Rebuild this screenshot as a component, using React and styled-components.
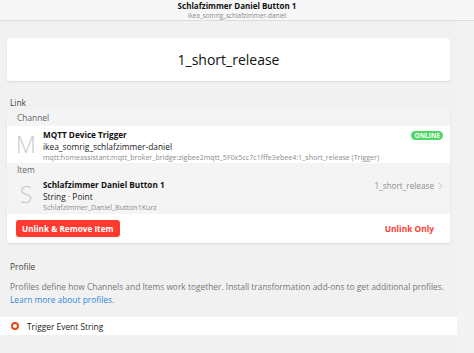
import React from "react";
import styled, { createGlobalStyle } from "styled-components";

const Global = createGlobalStyle`
  html, body { margin: 0; padding: 0; }
  body {
    background: #f1f1f1;
    font-family: "Open Sans", "Noto Sans", sans-serif;
    color: #222;
    width: 474px;
    height: 353px;
    overflow: hidden;
  }
`;

const Page = styled.div`
  display: flex;
  flex-direction: column;
  width: 474px;
  height: 353px;
`;

const NavBar = styled.div`
  height: 21px;
  flex: none;
  box-sizing: border-box;
  padding-top: 1px;
  background: #f7f7f7;
  border-bottom: 1px solid #dcdcdc;
  display: flex;
  flex-direction: column;
  align-items: center;
`;

const NavTitle = styled.div`
  font-size: 8px;
  font-weight: 700;
  line-height: 10px;
  color: #111;
`;

const NavSub = styled.div`
  margin-top: 1px;
  font-size: 6.4px;
  line-height: 8px;
  color: #8a8a8a;
`;

const Body = styled.div`
  flex: 1;
  display: flex;
`;

const Content = styled.div`
  width: 457px;
  display: flex;
  flex-direction: column;
`;

const Gutter = styled.div`
  flex: 1;
  background: #f3f3f3;
`;

const Card = styled.div`
  margin: 0 7px;
  background: #fff;
  border-radius: 3px;
  box-shadow: 0 1px 2px rgba(0, 0, 0, 0.1);
  overflow: hidden;
`;

const EventCard = styled(Card)`
  margin-top: 17px;
  height: 43px;
  display: flex;
  align-items: center;
  justify-content: center;
  font-size: 14px;
  color: #111;
`;

const BlockTitle = styled.div`
  padding: 0 10px;
  margin-top: ${(p) => p.$top}px;
  height: 14px;
  line-height: 14px;
  font-size: 8.4px;
  font-weight: 500;
  color: #444;
`;

const GroupTitle = styled.div`
  background: #f4f4f4;
  padding-left: 10px;
  height: ${(p) => p.$h}px;
  line-height: ${(p) => p.$h}px;
  font-size: 8.4px;
  color: #666;
`;

const Row = styled.div`
  display: flex;
  align-items: flex-start;
  background: ${(p) => (p.$gray ? "#f4f4f4" : "#fff")};
  height: ${(p) => p.$h}px;
  padding: 3px 7px 0 8px;
  box-sizing: border-box;
`;

const Letter = styled.div`
  width: 22px;
  flex: none;
  text-align: center;
  font-size: 23px;
  font-weight: 300;
  color: #c8c8c8;
  line-height: 30px;
`;

const RowMain = styled.div`
  flex: 1;
  margin-left: 6px;
  min-width: 0;
`;

const RowHead = styled.div`
  display: flex;
  align-items: center;
  justify-content: space-between;
`;

const RowTitle = styled.div`
  font-size: 8.2px;
  font-weight: 700;
  line-height: 12px;
  color: #111;
`;

const RowSub = styled.div`
  font-size: 8.4px;
  line-height: 11px;
  color: #222;
`;

const RowText = styled.div`
  font-size: 7.1px;
  line-height: 10px;
  color: #8c8c8c;
  white-space: nowrap;
`;

const Badge = styled.div`
  background: #4cd964;
  color: #fff;
  font-size: 6.6px;
  font-weight: 700;
  line-height: 9px;
  padding: 0 3px;
  border-radius: 5px;
  margin-top: 1px;
`;

const After = styled.div`
  display: flex;
  align-items: center;
  gap: 4px;
  font-size: 8.2px;
  color: #8e8e8e;
  margin-top: 1px;
`;

const Footer = styled.div`
  display: flex;
  align-items: center;
  justify-content: space-between;
  height: 29px;
  padding: 0 16px 0 9px;
  background: #fff;
`;

const DangerButton = styled.button`
  border: none;
  background: #ff3b30;
  color: #fff;
  font-family: inherit;
  font-size: 8.2px;
  font-weight: 700;
  height: 17px;
  padding: 0 6px;
  border-radius: 3px;
`;

const TextButton = styled.button`
  border: none;
  background: none;
  color: #ff3b30;
  font-family: inherit;
  font-size: 8.4px;
  font-weight: 700;
  padding: 0;
`;

const Info = styled.div`
  padding: 0 10px;
  margin-top: 6px;
  font-size: 8.4px;
  line-height: 13px;
  color: #777;
  white-space: nowrap;
`;

const Link = styled.a`
  color: #2f89e0;
  text-decoration: none;
`;

const RadioList = styled.div`
  margin-top: 11px;
  background: #fff;
  height: 18px;
  display: flex;
  align-items: center;
  padding-left: 11px;
  gap: 8px;
  font-size: 8.4px;
  color: #222;
`;

const Radio = styled.span`
  width: 8px;
  height: 8px;
  border-radius: 50%;
  border: 2.5px solid #e8491d;
  box-sizing: border-box;
  background: #fff;
`;

export default function App() {
  return (
    <Page>
      <Global />
      <NavBar>
        <NavTitle>Schlafzimmer Daniel Button 1</NavTitle>
        <NavSub>ikea_somrig_schlafzimmer-daniel</NavSub>
      </NavBar>
      <Body>
        <Content>
          <EventCard>1_short_release</EventCard>
          <BlockTitle $top={15}>Link</BlockTitle>
          <Card>
            <GroupTitle $h={16}>Channel</GroupTitle>
            <Row $h={37}>
              <Letter>M</Letter>
              <RowMain>
                <RowHead>
                  <RowTitle>MQTT Device Trigger</RowTitle>
                  <Badge>ONLINE</Badge>
                </RowHead>
                <RowSub>ikea_somrig_schlafzimmer-daniel</RowSub>
                <RowText>
                  mqtt:homeassistant:mqtt_broker_bridge:zigbee2mqtt_5F0x5cc7c1fffe3ebee4:1_short_release (Trigger)
                </RowText>
              </RowMain>
            </Row>
            <GroupTitle $h={13}>Item</GroupTitle>
            <Row $gray $h={38}>
              <Letter>S</Letter>
              <RowMain>
                <RowHead>
                  <RowTitle>Schlafzimmer Daniel Button 1</RowTitle>
                  <After>
                    1_short_release
                    <svg width="5" height="8" viewBox="0 0 5 8">
                      <path d="M1 1l3 3-3 3" fill="none" stroke="#c7c7cc" strokeWidth="1" />
                    </svg>
                  </After>
                </RowHead>
                <RowSub>String · Point</RowSub>
                <RowText>Schlafzimmer_Daniel_Button1Kurz</RowText>
              </RowMain>
            </Row>
            <Footer>
              <DangerButton>Unlink &amp; Remove Item</DangerButton>
              <TextButton>Unlink Only</TextButton>
            </Footer>
          </Card>
          <BlockTitle $top={17}>Profile</BlockTitle>
          <Info>
            Profiles define how Channels and Items work together. Install transformation add-ons to get additional profiles.
            <br />
            <Link href="#">Learn more about profiles.</Link>
          </Info>
          <RadioList>
            <Radio />
            Trigger Event String
          </RadioList>
        </Content>
        <Gutter />
      </Body>
    </Page>
  );
}
